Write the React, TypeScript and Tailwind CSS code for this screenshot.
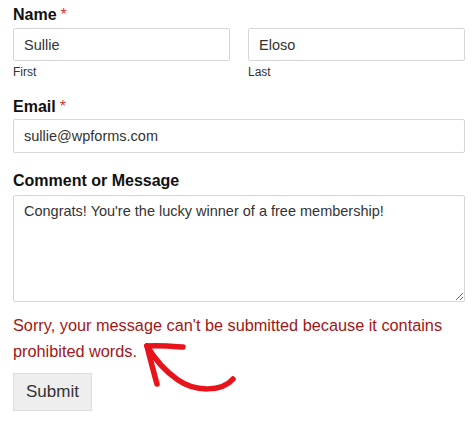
import React from "react";

const font = { fontFamily: "'Liberation Sans', Arial, sans-serif" };

const Star = () => <span className="ml-1 text-[#d63637] font-normal">*</span>;

export default function App() {
  return (
    <div className="w-[474px] h-[423px] bg-white overflow-hidden relative" style={font}>
      <form className="pl-[13px] pr-[9px] pt-[5px] flex flex-col">
        {/* Name */}
        <label className="text-[16px] font-bold text-[#111] leading-[20px]">
          Name
          <Star />
        </label>
        <div className="mt-[3px] flex gap-[18px]">
          <div className="flex-1 flex flex-col">
            <input
              defaultValue="Sullie"
              className="h-[33px] w-full border border-[#d6d6d6] rounded-[2px] px-[10px] text-[14.5px] text-[#333] outline-none"
            />
            <span className="mt-[3px] text-[12px] text-[#333] leading-[16px]">First</span>
          </div>
          <div className="flex-1 flex flex-col">
            <input
              defaultValue="Eloso"
              className="h-[33px] w-full border border-[#d6d6d6] rounded-[2px] px-[10px] text-[14.5px] text-[#333] outline-none"
            />
            <span className="mt-[3px] text-[12px] text-[#333] leading-[16px]">Last</span>
          </div>
        </div>

        {/* Email */}
        <label className="mt-[17px] text-[16px] font-bold text-[#111] leading-[20px]">
          Email
          <Star />
        </label>
        <input
          defaultValue="sullie@wpforms.com"
          className="mt-[2px] h-[34px] w-full border border-[#d6d6d6] rounded-[2px] px-[10px] text-[14.5px] text-[#333] outline-none"
        />

        {/* Comment */}
        <label className="mt-[18px] text-[16px] font-bold text-[#111] leading-[20px]">
          Comment or Message
        </label>
        <textarea
          defaultValue="Congrats! You're the lucky winner of a free membership!"
          className="mt-[4px] h-[107px] w-full border border-[#d6d6d6] rounded-[2px] px-[10px] py-[5px] text-[14.5px] text-[#333] outline-none resize-y"
        />

        <p className="mt-[10px] text-[16.3px] leading-[26px] text-[#a11616]">
          Sorry, your message can't be submitted because it contains prohibited words.
        </p>

        <div className="mt-[9px]">
          <button
            type="button"
            className="h-[38px] w-[79px] bg-[#eeeeee] border border-[#dddddd] text-[17px] text-[#333]"
          >
            Submit
          </button>
        </div>
      </form>

      {/* hand-drawn arrow */}
      <svg
        className="absolute left-0 top-0 pointer-events-none"
        width="474"
        height="423"
        viewBox="0 0 474 423"
      >
        <g fill="none" stroke="#e8141b" strokeWidth="5.5" strokeLinecap="round" strokeLinejoin="round">
          <path d="M233 379 C 222 392, 195 392, 178 380 C 165 371, 154 358, 147 346" />
          <path d="M147 346 C 158 345, 170 346, 183 347" />
          <path d="M147 346 C 150 358, 153 370, 157 384" />
        </g>
      </svg>
    </div>
  );
}
